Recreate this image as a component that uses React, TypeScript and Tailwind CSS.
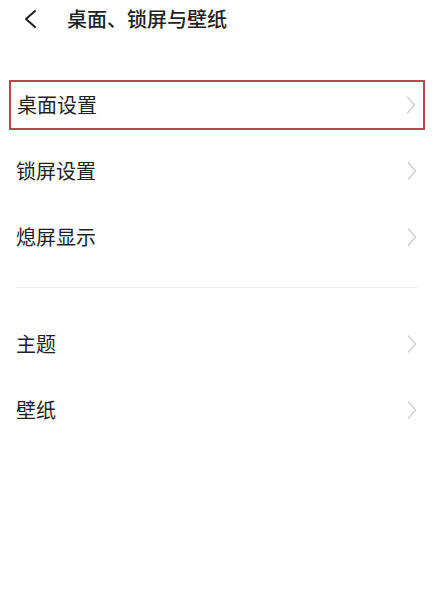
const GROUP_ONE = ['桌面设置', '锁屏设置', '熄屏显示'];
const GROUP_TWO = ['主题', '壁纸'];

function Chevron() {
  return (
    <svg width="10" height="18" viewBox="0 0 10 18" className="text-[#cfcfcf]">
      <path d="M1.5 1 L8.5 9 L1.5 17" fill="none" stroke="currentColor" strokeWidth="1.4" strokeLinecap="round" strokeLinejoin="round" />
    </svg>
  );
}

function Row({ label, highlighted }: { label: string; highlighted?: boolean }) {
  return (
    <div
      className={
        highlighted
          ? 'flex items-center justify-between h-[50px] my-2 mx-[9px] pl-[6px] pr-[7px] border-2 border-[#c2434d]'
          : 'flex items-center justify-between h-[66px] pl-4 pr-[17px]'
      }
    >
      <span className="text-[20px] leading-none text-[#1f1f1f]">{label}</span>
      <Chevron />
    </div>
  );
}

export default function App() {
  return (
    <div
      className="flex flex-col w-[434px] h-[589px] bg-white overflow-hidden"
      style={{ fontFamily: '"Noto Sans CJK SC", "Noto Sans", sans-serif' }}
    >
      {/* Header */}
      <div className="flex items-center h-[38px] pl-[22px]">
        <svg width="18" height="20" viewBox="0 0 18 20" className="text-[#222]">
          <path d="M13 2 L4 10 L13 18" fill="none" stroke="currentColor" strokeWidth="2" strokeLinecap="round" strokeLinejoin="round" />
        </svg>
        <span className="ml-[27px] text-[20px] font-medium text-[#1f1f1f] leading-none">桌面、锁屏与壁纸</span>
      </div>

      <div className="flex flex-col mt-[34px]">
        {GROUP_ONE.map((label, i) => (
          <Row key={label} label={label} highlighted={i === 0} />
        ))}
      </div>

      <div className="mx-4 mt-[17px] h-px bg-[#f0f0f0]" />

      <div className="flex flex-col mt-[23px]">
        {GROUP_TWO.map((label) => (
          <Row key={label} label={label} />
        ))}
      </div>
    </div>
  );
}
